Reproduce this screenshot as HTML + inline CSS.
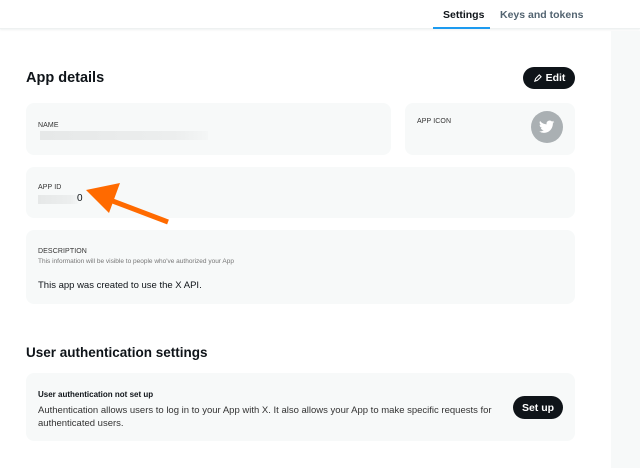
<!DOCTYPE html>
<html><head><style>
*{margin:0;padding:0;box-sizing:border-box}
body{width:640px;height:468px;background:#fff;font-family:"Liberation Sans",sans-serif;color:#0f1419;position:relative;overflow:hidden}
.abs{position:absolute}
.card{position:absolute;background:#f7f9f9;border-radius:8px}
.lbl{position:absolute;font-size:7px;color:#333;letter-spacing:.1px}
.blur{position:absolute;background:linear-gradient(90deg,#e6e8e8,#eceeee 80%,#f4f6f6);height:9px}
.btn{position:absolute;background:#0f1419;color:#fff;border-radius:12px;font-weight:bold;font-size:10.5px;display:flex;align-items:center;justify-content:center}
</style></head><body>
<div class="abs" style="left:0;top:0;width:640px;height:29px;border-bottom:1px solid #eef1f1;box-shadow:0 1px 2px #eef1f1"></div>
<div class="abs" style="left:443px;top:9px;font-size:10.5px;font-weight:bold">Settings</div>
<div class="abs" style="left:500px;top:9px;font-size:10.5px;font-weight:bold;color:#536471">Keys and tokens</div>
<div class="abs" style="left:433px;top:27px;width:57px;height:2px;background:#1d9bf0"></div>
<div class="abs" style="left:611px;top:31px;width:29px;height:437px;background:#f7f9f9"></div>

<div class="abs" style="left:26px;top:70px;font-size:14.5px;font-weight:bold">App details</div>
<div class="btn" style="left:523px;top:67px;width:52px;height:22px"><svg width="9" height="9" viewBox="0 0 10 10" style="margin-right:4px"><path d="M2 8l1-3 4-4 2 2-4 4z" fill="none" stroke="#fff" stroke-width="1.2"/></svg>Edit</div>

<div class="card" style="left:26px;top:103px;width:365px;height:52px"></div>
<div class="lbl" style="left:38px;top:122px">NAME</div>
<div class="blur" style="left:40px;top:131px;width:168px"></div>
<div class="card" style="left:405px;top:103px;width:170px;height:52px"></div>
<div class="lbl" style="left:417px;top:118px">APP ICON</div>
<div class="abs" style="left:531px;top:111px;width:32px;height:32px;border-radius:50%;background:#aab0b3;display:flex;align-items:center;justify-content:center"><svg width="16" height="14" viewBox="0 0 24 20"><path d="M23 2.5a9 9 0 0 1-2.7.8A4.7 4.7 0 0 0 22.4.7a9.4 9.4 0 0 1-3 1.1A4.7 4.7 0 0 0 11.4 6 13.4 13.4 0 0 1 1.6 1a4.7 4.7 0 0 0 1.5 6.3 4.7 4.7 0 0 1-2.1-.6 4.7 4.7 0 0 0 3.8 4.7 4.7 4.7 0 0 1-2.1.1 4.7 4.7 0 0 0 4.4 3.2A9.5 9.5 0 0 1 0 16.6 13.4 13.4 0 0 0 7.3 18.8c8.7 0 13.5-7.3 13.5-13.6v-.6A9.6 9.6 0 0 0 23 2.5z" fill="#fff"/></svg></div>

<div class="card" style="left:26px;top:167px;width:549px;height:51px"></div>
<div class="lbl" style="left:38px;top:184px">APP ID</div>
<div class="blur" style="left:38px;top:195px;width:40px"></div>
<div class="abs" style="left:77px;top:193px;font-size:10px">0</div>
<svg class="abs" style="left:82px;top:180px" width="90" height="45" viewBox="0 0 90 45"><path d="M86 42L20 17" stroke="#ff6a00" stroke-width="5"/><path d="M4 10L38 3 27 33z" fill="#ff6a00"/></svg>

<div class="card" style="left:26px;top:230px;width:549px;height:74px"></div>
<div class="lbl" style="left:38px;top:248px">DESCRIPTION</div>
<div class="abs" style="left:38px;top:258px;font-size:6.5px;color:#777">This information will be visible to people who've authorized your App</div>
<div class="abs" style="left:38px;top:280px;font-size:9.5px">This app was created to use the X API.</div>

<div class="abs" style="left:26px;top:345px;font-size:13.5px;font-weight:bold">User authentication settings</div>
<div class="card" style="left:26px;top:373px;width:549px;height:68px"></div>
<div class="abs" style="left:38px;top:390px;font-size:8px;font-weight:bold">User authentication not set up</div>
<div class="abs" style="left:38px;top:404px;font-size:9.5px;line-height:13px;color:#333;width:470px">Authentication allows users to log in to your App with X. It also allows your App to make specific requests for authenticated users.</div>
<div class="btn" style="left:513px;top:396px;width:50px;height:23px">Set up</div>
</body></html>
